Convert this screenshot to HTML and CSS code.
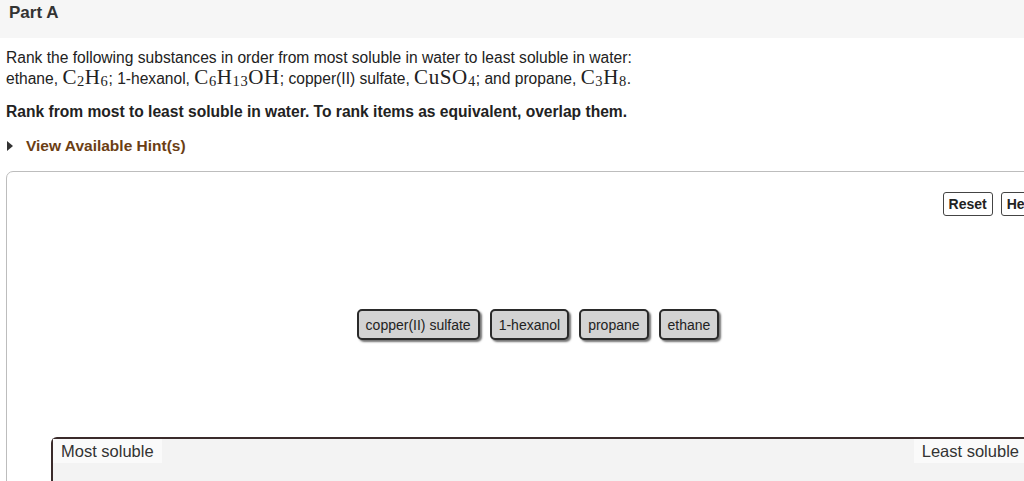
FILE: index.html
```html
<!DOCTYPE html>
<html>
<head>
<meta charset="utf-8">
<link rel="stylesheet" href="styles.css">
</head>
<body>
<div class="page">
  <div class="part-header">Part A</div>
  <div class="content">
    <p class="question">Rank the following substances in order from most soluble in water to least soluble in water:<br>
    ethane, <span class="m">C<sub>2</sub>H<sub>6</sub></span>; 1-hexanol, <span class="m">C<sub>6</sub>H<sub>13</sub>OH</span>; copper(II) sulfate, <span class="m">CuSO<sub>4</sub></span>; and propane, <span class="m">C<sub>3</sub>H<sub>8</sub></span>.</p>
    <p class="instruction">Rank from most to least soluble in water. To rank items as equivalent, overlap them.</p>
    <div class="hint"><span class="tri"></span><span class="hint-text">View Available Hint(s)</span></div>
    <div class="box">
      <div class="toolbar">
        <button class="btn">Reset</button>
        <button class="btn">Help</button>
      </div>
      <div class="tiles">
        <div class="tile">copper(II) sulfate</div>
        <div class="tile">1-hexanol</div>
        <div class="tile">propane</div>
        <div class="tile">ethane</div>
      </div>
      <div class="rank">
        <span class="label">Most soluble</span>
        <span class="label">Least soluble</span>
      </div>
    </div>
  </div>
</div>
</body>
</html>
```

FILE: styles.css
```css
html, body {
  margin: 0;
  padding: 0;
  background: #fff;
  overflow: hidden;
}
body {
  font-family: "Liberation Sans", Arial, sans-serif;
  color: #222;
}
.page {
  width: 1024px;
  height: 481px;
  overflow: hidden;
}
.part-header {
  height: 38px;
  background: #f6f6f6;
  font-weight: bold;
  font-size: 17px;
  color: #333;
  padding-left: 9px;
  padding-top: 3px;
  box-sizing: border-box;
}
.content {
  padding-left: 6px;
}
.question {
  margin: 9px 0 0 0;
  font-size: 15.6px;
  line-height: 21px;
  color: #222;
}
.m {
  font-family: "Liberation Serif", "Times New Roman", serif;
  font-size: 21px;
  letter-spacing: 0.6px;
  line-height: 0;
}
.m sub {
  font-size: 14.5px;
  vertical-align: -2px;
  line-height: 0;
}
.instruction {
  margin: 13px 0 0 0;
  font-size: 15.6px;
  font-weight: bold;
  line-height: 20px;
}
.hint {
  display: flex;
  align-items: center;
  margin-top: 14px;
  height: 20px;
}
.tri {
  width: 0;
  height: 0;
  border-top: 5px solid transparent;
  border-bottom: 5px solid transparent;
  border-left: 6px solid #333;
  margin-left: 1px;
  margin-right: 13px;
}
.hint-text {
  font-size: 15.5px;
  font-weight: bold;
  color: #6b3e14;
}
.box {
  margin-top: 15px;
  width: 1052px;
  height: 340px;
  border: 1px solid #bdbdbd;
  border-radius: 7px 0 0 0;
  box-sizing: border-box;
  padding-top: 20px;
}
.toolbar {
  display: flex;
  justify-content: flex-end;
  gap: 8px;
  padding-right: 14px;
}
.btn {
  font-family: "Liberation Sans", Arial, sans-serif;
  font-weight: bold;
  font-size: 14px;
  color: #222;
  background: #fff;
  border: 1px solid #444;
  border-radius: 3px;
  height: 24px;
  padding: 0 5px;
  margin: 0;
}
.tiles {
  display: flex;
  justify-content: center;
  gap: 10px;
  margin-top: 93px;
  padding-left: 12px;
}
.tile {
  background: #d3d3d3;
  border: 2px solid #2a2a2a;
  border-radius: 5px;
  box-shadow: 2px 2px 2px rgba(0,0,0,0.55);
  font-size: 14px;
  color: #222;
  height: 31px;
  box-sizing: border-box;
  padding: 0 7px;
  display: flex;
  align-items: center;
}
.rank {
  margin: 97px 30px 0 44px;
  height: 60px;
  background: #f3f3f3;
  border-top: 2px solid #3a2b2b;
  border-left: 2px solid #3a2b2b;
  border-radius: 6px 0 0 0;
  display: flex;
  justify-content: space-between;
  align-items: flex-start;
}
.label {
  background: #fafafa;
  font-size: 16.5px;
  color: #333;
  padding: 2px 8px;
  line-height: 20px;
}
```
